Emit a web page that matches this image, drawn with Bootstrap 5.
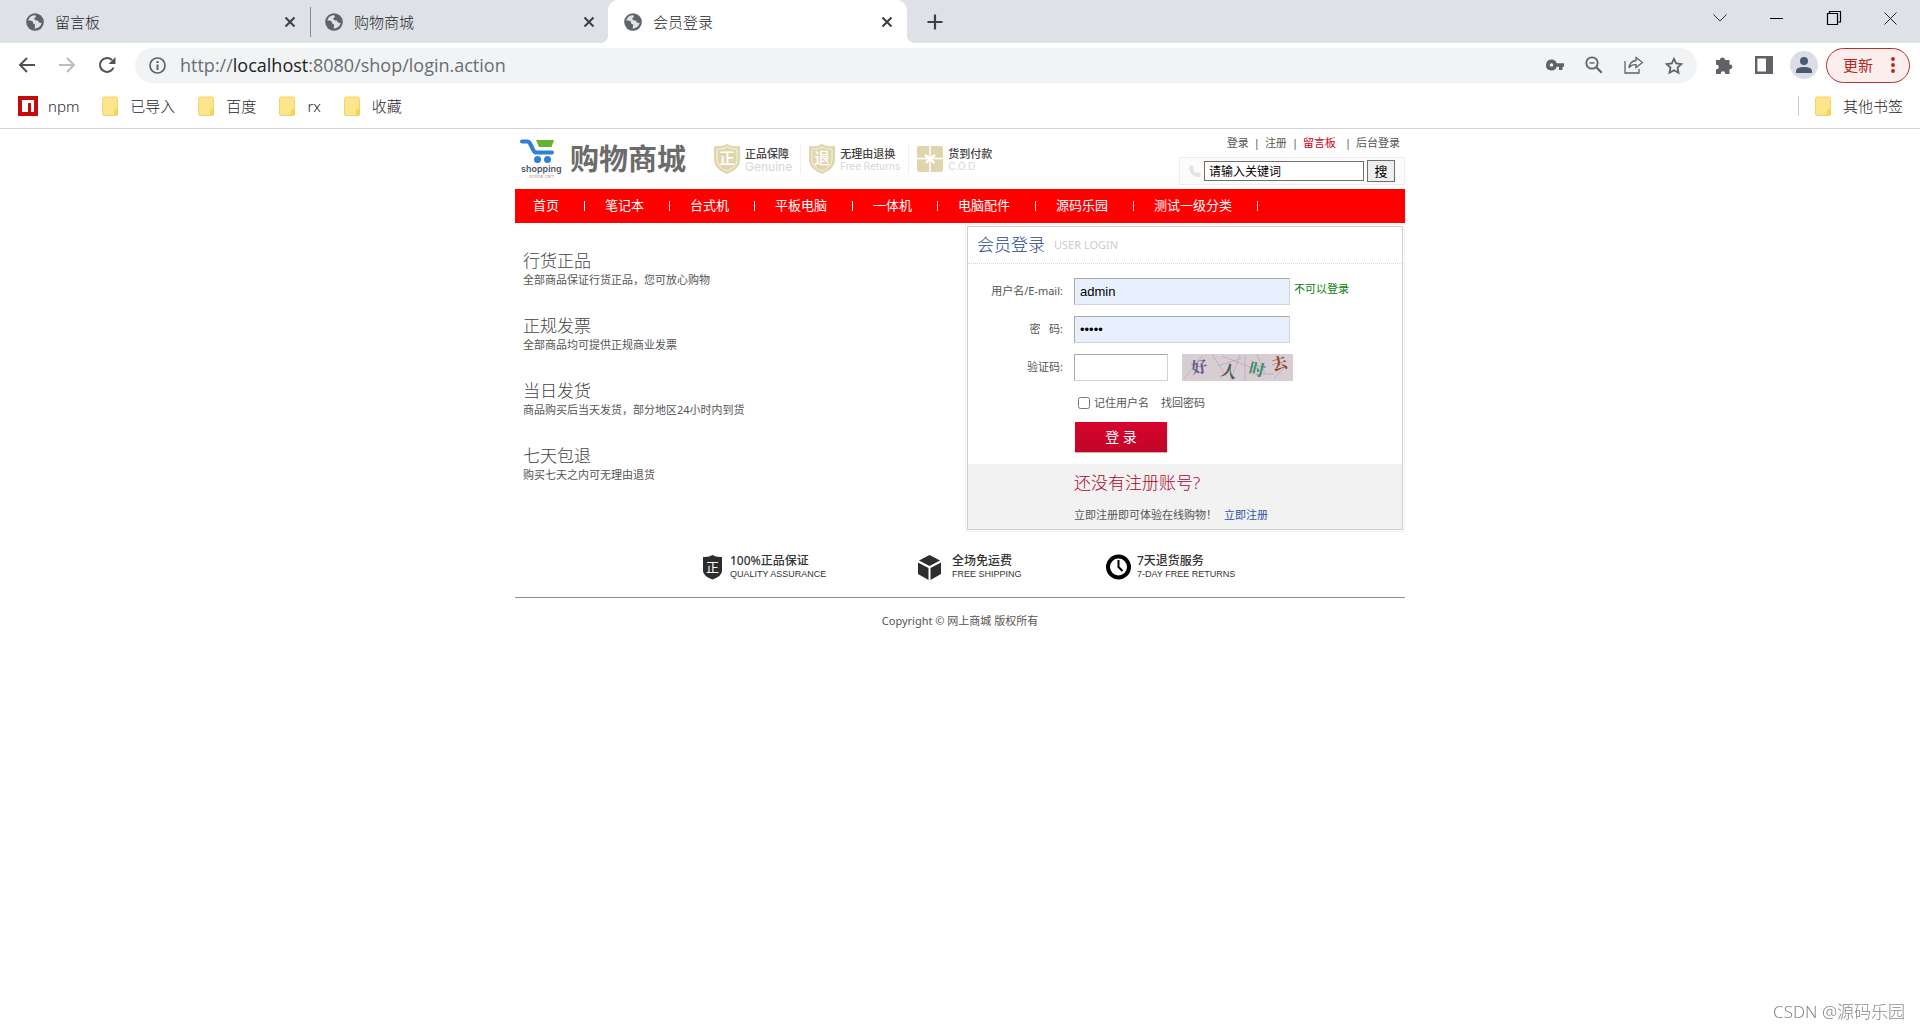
<!DOCTYPE html>
<html lang="zh-CN">
<head>
<meta charset="utf-8">
<meta name="viewport" content="width=device-width, initial-scale=1">
<title>会员登录</title>
<link href="https://cdn.jsdelivr.net/npm/bootstrap@5.3.0/dist/css/bootstrap.min.css" rel="stylesheet">
<style>
:root{--cjk:"Noto Sans","Noto Sans CJK SC",sans-serif}
body{font-family:var(--cjk);font-size:11px;line-height:16px;color:#555;background:#fff;min-height:100vh}
a{color:inherit;text-decoration:none}
button{font-family:inherit}
svg{display:block;flex:none;overflow:visible}
.plain{border:0;background:none;padding:0;color:inherit;display:flex;align-items:center;justify-content:center}
/* browser frame */
.chrome-ui{font-size:15px;line-height:20px;font-weight:300;color:#25282b}
.tabstrip{height:43px;background:#dee1e6}
.tab{width:299px;height:43px;padding:0 14px 0 16px;gap:11px}
.tab-idle{height:30px;align-self:center}
.tab-first{width:311px;padding-left:26px;border-right:1px solid #868b90}
.tab-second{width:289px;padding:0 5px 0 14px}
.tab-on{background:#fff;border-radius:10px 10px 0 0}
.tab-name{flex:1}
.curve{width:8px;height:8px;align-self:flex-end}
.curve-l{background:radial-gradient(circle at 0 0,#dee1e6 8px,#fff 8px)}
.curve-r{background:radial-gradient(circle at 100% 0,#dee1e6 8px,#fff 8px)}
.win-btn{width:57px;height:36px;color:#111}
.win-group{padding-right:1px}
.toolbar-row{height:44px;padding:0 10px 0 17px}
.nav-btn{width:20px;height:20px}
.nav-group{gap:20px;margin-right:18px}
.omnibox{height:35px;border-radius:18px;background:#f1f3f4;padding:0 14px;gap:14px}
.omni-icons{gap:21px}
.url-text{font-family:"Open Sans","Noto Sans",sans-serif;font-size:18px;font-weight:400;color:#6a6e72;flex:1}
.url-text b{font-weight:400;color:#202124}
.ext-btn{width:18px;margin:0 22px 0 18px}
.avatar{width:28px;height:28px;border-radius:50%;background:#dadde4;margin:0 8px 0 17px}
.update{height:35px;width:84px;border:1px solid #b3322c;border-radius:18px;background:#fceeed;color:#b3261e;padding:0 14px 0 16px;justify-content:space-between}
.bookmarks{height:42px;padding:0 17px 4px 18px;border-bottom:1px solid #d3d3d3}
.bm{gap:12px;margin-right:23px}
.bm-npm{gap:10px}
.bm-right{border-left:1px solid #c8cacc;height:20px;padding-left:16px;margin-right:0}
/* shop */
.shop{max-width:890px;margin:0 auto}
.shop-head{height:60px}
.brand{padding-left:6px;gap:7px}
.logo-name{font-size:29px;line-height:40px;font-weight:700;color:#6b6b6b}
.perks{padding-left:28px}
.perk{gap:5px;padding-right:8px;line-height:14px;color:#444;font-weight:500}
.perk small{display:block;font-size:10px;line-height:11px;color:#d6d6d6;font-family:Inter,sans-serif;font-weight:400}
.perk .wide-en{font-size:12px}
.perk-line{border-right:1px solid #f0f0f0}
.toplinks{gap:5px;padding:6px 5px 0 0}
.msg-link{color:#d0021b}
.searchbar{width:226px;height:28px;border:1px solid #ededed;background:#fcfcfc;padding:0 8px;gap:3px;margin-top:6px}
.searchbar input{width:160px;height:20px;border:1px solid #6f6f6f;padding:0 4px;font-size:12px;color:#000}
.searchbar button{width:28px;height:22px;border:1px solid #6f6f6f;background:#efefef;font-size:13px;line-height:18px;padding:0;color:#000}
.menu{background:#f00;color:#fff;font-size:13px;height:34px;padding:0 18px;gap:20px}
.menu a{padding-bottom:2px}
.menu i{width:1px;height:10px;background:#fff;margin-left:5px}
.promise{padding:27px 8px 0;color:#555}
.promise dt{font-size:17px;line-height:22px;font-weight:300;color:#444}
.promise dd{line-height:16px;margin-bottom:27px}
.loginbox{width:440px;margin-top:1px;border:1px solid #f2f2f2;padding:1px}
.login-in{border:1px solid #cfcfcf}
.login-title{height:37px;border-bottom:1px dotted #d8d8d8;padding-left:9px;gap:9px}
.login-title h1{font-size:17px;line-height:22px;margin:0;font-weight:300;color:#1f4690}
.login-title span{color:#ccc}
.login-form{padding-top:13px}
.frow{display:flex;align-items:center;height:28px;margin-bottom:10px}
.frow>label:first-child{width:95px;text-align:right;margin-right:11px}
.field{width:216px;height:27px;border:1px solid #d4d4d4;border-top-color:#aaa;border-left-color:#aaa;padding:0 5px;font:13px "Liberation Sans",sans-serif;color:#000}
.filled{background:#e8f0fe}
.field-code{width:94px;margin-right:14px}
.hint{color:#0a7d0a;margin-left:4px;padding-bottom:4px}
.indent{margin-left:107px}
.remember{height:16px;padding:0 0 0 3px;margin-top:14px}
.remember input{width:12px;height:12px}
.login-btn{width:92px;height:30px;border:0;background:linear-gradient(#d8042c,#c00528);color:#fff;font-size:14px;box-shadow:0 1px 1px #bbb;margin-top:11px;margin-bottom:12px}
.joinbox{background:#f2f2f2;height:65px;padding:8px 0 0 106px}
.joinbox h2{font-size:17px;line-height:22px;font-weight:300;color:#b0002b;margin:0 0 13px}
.join-link{color:#2b549e;margin-left:7px}
.assure{padding:22px 0 0 188px;height:65px}
.assure-item{color:#333;gap:8px}
.assure-a{width:215px}
.assure-b{width:188px;gap:11px}
.assure-c{gap:6px}
.assure strong{display:block;font-size:12px;line-height:14px;font-weight:500}
.assure span{display:block;font-size:9px;line-height:12px;color:#333;font-family:"Liberation Sans",sans-serif}
.foot{border-top:1px solid #8c8c8c;padding-top:15px}
.watermark{position:fixed;right:15px;bottom:6px;font-size:17px;line-height:24px;font-weight:300;color:#888}
</style>
<script src="https://cdn.jsdelivr.net/npm/bootstrap@5.3.0/dist/js/bootstrap.bundle.min.js"></script>
</head>
<body>
<svg width="0" height="0" class="position-absolute">
<defs>
<symbol id="globe" viewBox="0 0 18 18"><circle cx="9" cy="9" r="8.8" fill="#5f6368"/><path d="M9.300 2.200C6 2 3 4.200 2.300 7.600c2 .2 3.500.1 4.500 1.200.6.8-.1 1.900 1 2.100 1.600.2 1.500.8 1.200 2.100l-.4 2.600c3.600.1 6.600-2.500 7-6-1 .7-2.300.2-3-.6-.5-.7.1-1.400-.9-1.500-1.700 0-3.500-.4-3.400-2 0-1.100 1.200-.9 1.500-1.600.2-.6-.2-1.200-.5-1.700z" fill="#dee1e6"/></symbol>
<symbol id="x" viewBox="0 0 12 12"><path d="M1.500 1.500l9 9m0-9l-9 9" stroke="#3c4043" stroke-width="2" fill="none"/></symbol>
<symbol id="folder" viewBox="0 0 16 20"><path d="M2 1h12q1.500 0 1.500 1.500V18q0 1.500-1.500 1.500H2Q.5 19.500.5 18V2.500Q.5 1 2 1z" fill="#fde58b" stroke="#f3d36b"/><path d="M12.500 19v-4q0-2 1.500-2t1.500 2v2q0 2-1.500 2z" fill="#fbd958" stroke="#efc94e" stroke-width=".7"/></symbol>
<symbol id="shield" viewBox="0 0 26 30"><path d="M13 0q5 3 13 2v14q0 9-13 14Q0 25 0 16V2q8 1 13-2z" fill="#e0d6ad"/><path d="M13 3q4 2.500 10 2v11q0 7-10 11Q3 23 3 16V5q6 .5 10-2z" fill="none" stroke="#f7f3e2"/></symbol>
</defs>
</svg>

<header class="chrome-ui">
<div class="tabstrip d-flex">
  <div class="tab tab-idle tab-first d-flex align-items-center"><svg width="18" height="18"><use href="#globe"/></svg><span class="tab-name">留言板</span><button class="plain" aria-label="关闭"><svg width="12" height="12"><use href="#x"/></svg></button></div>
  <div class="tab tab-idle tab-second d-flex align-items-center"><svg width="18" height="18"><use href="#globe"/></svg><span class="tab-name">购物商城</span><button class="plain" aria-label="关闭"><svg width="12" height="12"><use href="#x"/></svg></button></div>
  <span class="curve curve-l"></span>
  <div class="tab tab-on d-flex align-items-center"><svg width="18" height="18"><use href="#globe"/></svg><span class="tab-name">会员登录</span><button class="plain" aria-label="关闭"><svg width="12" height="12"><use href="#x"/></svg></button></div>
  <span class="curve curve-r"></span>
  <button class="plain ms-2" aria-label="新标签页"><svg class="ms-1" width="16" height="16" viewBox="0 0 16 16"><path d="M8 .5v15M.5 8h15" stroke="#3c4043" stroke-width="2.200"/></svg></button>
  <div class="win-group d-flex ms-auto">
    <button class="plain win-btn" aria-label="搜索标签页"><svg width="14" height="8" viewBox="0 0 14 8"><path d="M.5.5L7 7 13.500.5" fill="none" stroke="#333"/></svg></button>
    <button class="plain win-btn" aria-label="最小化"><svg width="13" height="13" viewBox="0 0 13 13"><path d="M0 6.500h13" stroke="#000"/></svg></button>
    <button class="plain win-btn" aria-label="还原"><svg width="14" height="14" viewBox="0 0 14 14"><path d="M.5 2.500h10v11H.5zM2.500 2.500v-2h11v10.500h-3" fill="none" stroke="#000" stroke-width="1.200"/></svg></button>
    <button class="plain win-btn" aria-label="关闭窗口"><svg width="13" height="13" viewBox="0 0 13 13"><path d="M.5.5l12 12m0-12l-12 12" stroke="#222"/></svg></button>
  </div>
</div>
<div class="toolbar-row d-flex align-items-center">
  <div class="nav-group d-flex">
    <button class="plain nav-btn" aria-label="后退"><svg width="18" height="16" viewBox="0 0 18 16"><path d="M17 8H2m7-7L2 8l7 7" fill="none" stroke="#50545a" stroke-width="2"/></svg></button>
    <button class="plain nav-btn" aria-label="前进"><svg width="18" height="16" viewBox="0 0 18 16"><path d="M1 8h15M9 1l7 7-7 7" fill="none" stroke="#bbbdc0" stroke-width="2"/></svg></button>
    <button class="plain nav-btn" aria-label="刷新"><svg width="18" height="18" viewBox="0 0 18 18"><path d="M15.500 11.500A7 7 0 1 1 14 4" fill="none" stroke="#50545a" stroke-width="2"/><path d="M17.500 1v7h-7z" fill="#50545a"/></svg></button>
  </div>
  <div class="omnibox d-flex align-items-center flex-grow-1">
    <svg width="17" height="17" viewBox="0 0 17 17"><circle cx="8.500" cy="8.500" r="7.500" fill="none" stroke="#5f6368" stroke-width="1.700"/><path d="M8.500 4v2m0 1.500V13" stroke="#5f6368" stroke-width="2"/></svg>
    <span class="url-text">http://<b>localhost</b>:8080/shop/login.action</span>
    <div class="omni-icons d-flex align-items-center">
    <svg width="18" height="12" viewBox="0 0 18 12"><path d="M5.500.5a5.500 5.500 0 1 0 5.200 7.300H13V11h3.500V7.800H18V4.200h-7.300A5.500 5.500 0 0 0 5.500.5zm0 3.700a1.800 1.800 0 1 1 0 3.600 1.800 1.800 0 0 1 0-3.600z" fill="#5f6368"/></svg>
    <svg width="18" height="18" viewBox="0 0 18 18"><circle cx="7" cy="7" r="5.700" fill="none" stroke="#5f6368" stroke-width="1.800"/><path d="M4.500 7h5" stroke="#5f6368" stroke-width="1.400"/><path d="M11.500 11.500l5.200 5.200" stroke="#5f6368" stroke-width="2.200"/></svg>
    <svg width="20" height="18" viewBox="0 0 20 18"><path d="M1 5v12h14v-4M12 1.500l6.500 5-6.500 5V8.700C8.500 8.500 6.500 9.500 5 12c.4-4 3-7 7-7.500z" fill="none" stroke="#5f6368" stroke-width="1.300"/></svg>
    <svg width="18" height="17" viewBox="0 0 18 17"><path d="M9 1.800l2.200 4.700 5.100.6-3.800 3.500 1 5.100L9 13.200l-4.500 2.500 1-5.100L1.700 7.100l5.100-.6z" fill="none" stroke="#5f6368" stroke-width="1.800"/></svg>
    </div>
  </div>
  <button class="plain ext-btn" aria-label="扩展程序"><svg width="18" height="18" viewBox="0 0 18 18"><path d="M5 4a2.500 2.500 0 0 1 5 0h4.500v4.500H15a2.300 2.300 0 0 1 0 4.700h-.5V18h-4.300v-.5a2.200 2.200 0 0 0-4.400 0v.5H1v-4.800h.5a2.200 2.200 0 0 0 0-4.400H1V4z" fill="#5f6368"/></svg></button>
  <svg width="18" height="18" viewBox="0 0 18 18"><path d="M1.200 1.200h15.600v15.600H1.200z" fill="#fff" stroke="#5f6368" stroke-width="2.400"/><path d="M11 1h6v16h-6z" fill="#5f6368"/></svg>
  <span class="avatar d-flex align-items-center justify-content-center"><svg width="16" height="16" viewBox="0 0 16 16"><circle cx="8" cy="4" r="4" fill="#4a5a75"/><path d="M0 16v-2q0-4 8-4t8 4v2z" fill="#4a5a75"/></svg></span>
  <button class="update d-flex align-items-center">更新<svg width="4" height="16" viewBox="0 0 4 16"><g fill="#b3261e"><circle cx="2" cy="2" r="1.900"/><circle cx="2" cy="8" r="1.900"/><circle cx="2" cy="14" r="1.900"/></g></svg></button>
</div>
<div class="bookmarks d-flex align-items-center">
  <a href="#" class="bm bm-npm d-flex align-items-center"><svg width="20" height="20" viewBox="0 0 20 20"><path d="M0 0h20v20H0z" fill="#c30b0b"/><path d="M4 4h12v12h-3V7h-3v9H4z" fill="#fff"/></svg>npm</a>
  <a href="#" class="bm d-flex align-items-center"><svg width="16" height="20"><use href="#folder"/></svg>已导入</a>
  <a href="#" class="bm d-flex align-items-center"><svg width="16" height="20"><use href="#folder"/></svg>百度</a>
  <a href="#" class="bm d-flex align-items-center"><svg width="16" height="20"><use href="#folder"/></svg>rx</a>
  <a href="#" class="bm d-flex align-items-center"><svg width="16" height="20"><use href="#folder"/></svg>收藏</a>
  <a href="#" class="bm bm-right d-flex align-items-center ms-auto"><svg width="16" height="20"><use href="#folder"/></svg>其他书签</a>
</div>
</header>

<main class="shop">
<div class="shop-head d-flex">
  <a href="#" class="brand d-flex align-items-center">
    <svg width="42" height="42" viewBox="0 0 42 42"><path d="M1 3.500h5q2 0 3 2l3.500 7q1 2 3 2H31" fill="none" stroke="#2f7fd6" stroke-width="4" stroke-linecap="round"/><path d="M15 2h18l-2.500 7H18z" fill="#62b32d"/><circle cx="16.500" cy="21.500" r="3.500" fill="#2f7fd6"/><circle cx="26.500" cy="21.500" r="3.500" fill="#2f7fd6"/><text x="0" y="34" font-family="Inter,sans-serif" font-weight="600" font-size="9" fill="#4c5468">shopping</text><text x="8" y="40" font-family="Inter,sans-serif" font-size="5" fill="#aaa">online cart</text></svg>
    <span class="logo-name">购物商城</span></a>
  <div class="perks d-flex align-items-center">
    <div class="perk perk-line d-flex align-items-center"><svg width="26" height="30"><use href="#shield"/><text x="5" y="20" font-size="16" fill="#fff">正</text></svg><span>正品保障<small class="wide-en">Genuine</small></span></div>
    <div class="perk perk-line d-flex align-items-center ps-2"><svg width="26" height="30"><use href="#shield"/><text x="5" y="20" font-size="16" fill="#fff">退</text></svg><span>无理由退换<small>Free Returns</small></span></div>
    <div class="perk d-flex align-items-center ps-2"><svg width="26" height="26" viewBox="0 0 26 26"><rect width="26" height="26" rx="2" fill="#e0d6ad"/><path d="M13 0v26M0 12.500h26" stroke="#fff" stroke-width="1.500"/><path d="M13 12.500L8 9m5 3.500L18 9m-5 3.500L9 17m4-4.500l4 4.500" stroke="#fff" stroke-width="2.500"/></svg><span>货到付款<small>C.O.D</small></span></div>
  </div>
  <div class="ms-auto">
    <div class="toplinks d-flex justify-content-end"><a href="#">登录</a>|<a href="#">注册</a>|<a href="#" class="msg-link">留言板</a><span class="ms-1">|</span><a href="#">后台登录</a></div>
    <form class="searchbar d-flex align-items-center"><svg width="13" height="13" viewBox="0 0 13 13"><path d="M2 1l2-1 2 3-1 2q1 2 3 3l2-1 3 2-1 3Q4 13 1 4 1 2 2 1z" fill="#e3e3e3"/></svg><input type="text" value="请输入关键词" aria-label="关键词"><button type="button">搜</button></form>
  </div>
</div>
<nav class="menu d-flex align-items-center"><a href="#">首页</a><i></i><a href="#">笔记本</a><i></i><a href="#">台式机</a><i></i><a href="#">平板电脑</a><i></i><a href="#">一体机</a><i></i><a href="#">电脑配件</a><i></i><a href="#">源码乐园</a><i></i><a href="#">测试一级分类</a><i></i></nav>

<div class="d-flex justify-content-between">
  <dl class="promise mb-0">
    <dt>行货正品</dt><dd>全部商品保证行货正品，您可放心购物</dd>
    <dt>正规发票</dt><dd>全部商品均可提供正规商业发票</dd>
    <dt>当日发货</dt><dd>商品购买后当天发货，部分地区24小时内到货</dd>
    <dt>七天包退</dt><dd>购买七天之内可无理由退货</dd>
  </dl>
  <section class="loginbox"><div class="login-in">
    <div class="login-title d-flex align-items-center"><h1>会员登录</h1><span>USER LOGIN</span></div>
    <form class="login-form">
      <div class="frow"><label for="u">用户名/E-mail:</label><input id="u" class="field filled" type="text" value="admin"><span class="hint">不可以登录</span></div>
      <div class="frow"><label for="p">密&nbsp;&nbsp; 码:</label><input id="p" class="field filled" type="password" value="admin"></div>
      <div class="frow"><label for="c">验证码:</label><input id="c" class="field field-code" type="text">
        <svg width="111" height="27" viewBox="0 0 111 27"><path d="M0 0h111v27H0z" fill="#d8cdd2"/><path d="M2 25L20 2M30 0l14 22M36 12L60 4M40 2l30 12M63 1v26M75 0l8 20M92 24l12-12M70 20h22M48 27L58 1" stroke="#bda9b2" stroke-width=".8" fill="none"/><g font-size="16" font-weight="700" font-family="Noto Serif CJK SC,Noto Sans CJK SC,serif"><text transform="translate(10 20) rotate(-8)" fill="#605a86">好</text><text transform="translate(38 21) rotate(14)" fill="#4c5a60">人</text><text transform="translate(66 19) rotate(14)" fill="#3c8a72">时</text><text transform="translate(91 17) rotate(-14)" fill="#93482f">去</text></g></svg></div>
      <div class="remember indent d-flex align-items-center"><input id="r" type="checkbox" class="m-0 me-1"><label for="r">记住用户名</label><a href="#" class="ms-2 ps-1">找回密码</a></div>
      <button type="button" class="login-btn indent d-block">登 录</button>
    </form>
    <div class="joinbox"><h2>还没有注册账号?</h2>立即注册即可体验在线购物！<a href="#" class="join-link">立即注册</a></div>
  </div></section>
</div>

<div class="assure d-flex">
  <div class="assure-item assure-a d-flex"><svg width="19" height="26" viewBox="0 0 19 26"><path d="M9.500 1Q13 3.500 19 3v14q0 5-9.500 8.500Q0 22 0 17V3q6 .5 9.500-2z" fill="#2d2d2d"/><text x="3" y="18" font-size="13" fill="#fff">正</text></svg><p class="mb-0"><strong>100%正品保证</strong><span>QUALITY ASSURANCE</span></p></div>
  <div class="assure-item assure-b d-flex"><svg width="23" height="26" viewBox="0 0 23 26"><path d="M11.500 1L22 6.500 11.500 12 1 6.500zM0 8.500L10.500 14v12L0 20zM23 8.500L12.500 14v12L23 20z" fill="#2d2d2d"/></svg><p class="mb-0"><strong>全场免运费</strong><span>FREE SHIPPING</span></p></div>
  <div class="assure-item assure-c d-flex"><svg width="25" height="26" viewBox="0 0 25 26"><circle cx="12.500" cy="13" r="10.500" fill="#fff" stroke="#000" stroke-width="4"/><path d="M12.500 6v7l4 4" fill="none" stroke="#000" stroke-width="2"/></svg><p class="mb-0"><strong>7天退货服务</strong><span>7-DAY FREE RETURNS</span></p></div>
</div>
<footer class="foot text-center">Copyright © 网上商城 版权所有</footer>
</main>
<div class="watermark">CSDN @源码乐园</div>
</body>
</html>
